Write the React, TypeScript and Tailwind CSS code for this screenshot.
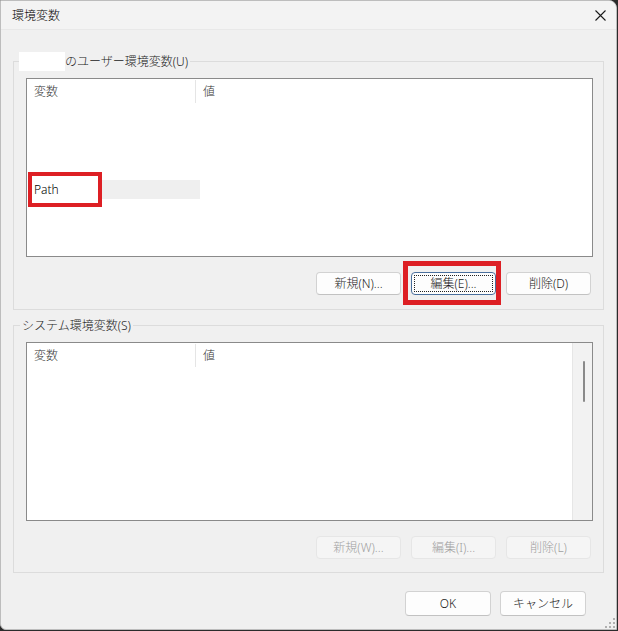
import React from "react";

const font = { fontFamily: "'Noto Sans', 'Noto Sans CJK JP', sans-serif" };

function Btn({ label, disabled, focused, wide }: { label: string; disabled?: boolean; focused?: boolean; wide?: boolean }) {
  const base =
    "relative flex items-center justify-center rounded-[4px] border text-[12px] leading-none " +
    (wide ? "w-[86px] h-[25px] " : "w-[85px] h-[23px] ");
  if (disabled)
    return <div className={base + "bg-[#f5f5f5] border-[#e6e6e6] text-[#a0a0a0]"}>{label}</div>;
  if (focused)
    return (
      <div className={base + "bg-[#fdfdfd] border-[#4a6f9c] text-[#1a1a1a]"}>
        <span className="absolute inset-[2px] border border-dotted border-[#222]" />
        {label}
      </div>
    );
  return <div className={base + "bg-[#fdfdfd] border-[#d2d2d2] border-b-[#c2c2c2] text-[#1a1a1a]"}>{label}</div>;
}

function Header() {
  return (
    <div className="flex h-[25px] items-center text-[12px] text-[#333]">
      <div className="w-[168px] pl-[7px]">変数</div>
      <div className="h-[23px] w-px bg-[#e5e5e5]" />
      <div className="pl-[7px]">値</div>
    </div>
  );
}

export default function App() {
  return (
    <div className="w-[618px] h-[631px] bg-[#2b2b2b] font-light" style={font}>
      <div className="relative flex h-[630px] w-[617px] flex-col overflow-hidden rounded-tr-[8px] rounded-bl-[6px] border border-[#bdbdbd] bg-[#f0f0f0]">
        {/* title bar */}
        <div className="flex h-[29px] shrink-0 items-center justify-between border-b border-[#e8e8e8] bg-[#f3f3f3] pl-[11px] pr-[9px]">
          <span className="pt-[1px] text-[12px] text-black">環境変数</span>
          <svg width="11" height="11" viewBox="0 0 11 11" className="mr-[1px]">
            <path d="M0.5 0.5 L10.5 10.5 M10.5 0.5 L0.5 10.5" stroke="#1a1a1a" strokeWidth="1.1" />
          </svg>
        </div>

        <div className="flex flex-col px-[12px]">
          {/* user group */}
          <fieldset className="mt-[22px] border border-[#dcdcdc] pb-[14px] pt-[7px]">
            <legend className="ml-[5px] flex h-[19px] items-center pr-[2px] text-[12px] text-[#222]">
              <span className="h-[19px] w-[46px] bg-white" />
              <span>のユーザー環境変数(U)</span>
            </legend>
            <div className="pl-[12px] pr-[10px]">
              <div className="h-[179px] border border-[#8a8a8a] bg-white">
                <Header />
                <div className="relative mt-[76px] flex h-[19px] text-[12px] text-black">
                  <div className="flex w-[75px] items-center pl-[7px]">Path</div>
                  <div className="w-[98px] bg-[#efefef]" />
                  <span className="absolute left-[1px] top-[-8px] h-[35px] w-[74px] border-[4px] border-[#dd1f24]" />
                </div>
              </div>
              <div className="mr-[2px] mt-[15px] flex justify-end gap-[10px]">
                <Btn label="新規(N)..." />
                <div className="relative">
                  <Btn label="編集(E)..." focused />
                  <span className="absolute left-[-8px] right-[-5px] top-[-11px] bottom-[-10px] border-[5px] border-[#dd1f24]" />
                </div>
                <Btn label="削除(D)" />
              </div>
            </div>
          </fieldset>

          {/* system group */}
          <fieldset className="mt-[6px] border border-[#dcdcdc] pb-[13px] pt-[7px]">
            <legend className="ml-[6px] flex h-[19px] items-center px-[2px] text-[12px] text-[#222]">
              システム環境変数(S)
            </legend>
            <div className="pl-[12px] pr-[10px]">
              <div className="flex h-[179px] border border-[#8a8a8a] bg-white">
                <div className="flex-1">
                  <Header />
                </div>
                <div className="flex w-[20px] justify-center border-l border-[#e6e6e6] bg-[#f2f2f2] pt-[18px] pl-[2px]">
                  <div className="h-[41px] w-[2px] rounded-full bg-[#8a8a8a]" />
                </div>
              </div>
              <div className="mr-[2px] mt-[15px] flex justify-end gap-[10px]">
                <Btn label="新規(W)..." disabled />
                <Btn label="編集(I)..." disabled />
                <Btn label="削除(L)" disabled />
              </div>
            </div>
          </fieldset>

          {/* bottom buttons */}
          <div className="mt-[18px] flex justify-end gap-[9px] pr-[18px]">
            <Btn label="OK" wide />
            <Btn label="キャンセル" wide />
          </div>
        </div>

        <svg width="10" height="10" viewBox="0 0 10 10" className="absolute bottom-[1px] right-[1px]">
          {[
            [8, 0], [8, 4], [4, 4], [8, 8], [4, 8], [0, 8],
          ].map(([x, y], i) => (
            <rect key={i} x={x} y={y} width="2" height="2" fill="#b0b0b0" />
          ))}
        </svg>
      </div>
    </div>
  );
}
